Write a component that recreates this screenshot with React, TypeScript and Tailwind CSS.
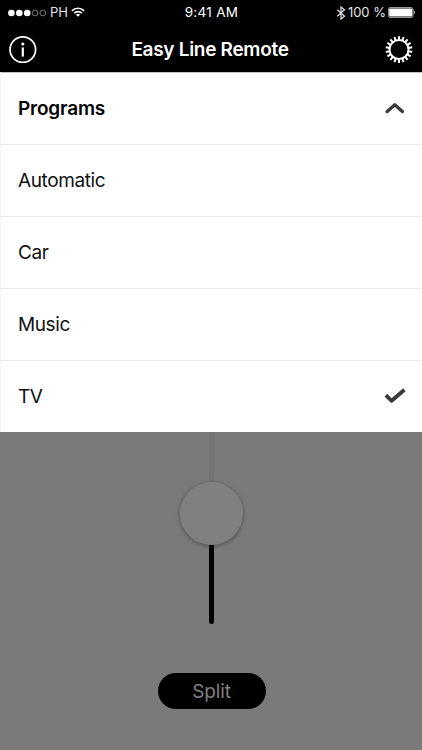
import { clsx } from "clsx"

const programs = ["Automatic", "Car", "Music", "TV"]
const teeth = Array.from({ length: 18 }, (_, i) => i * 20)

function StatusBar() {
    return (
        <div className="flex h-[25px] items-center justify-between pl-[8px] pr-[7px] text-[13px] leading-none">
            <div className="flex w-[140px] items-center">
                <svg width="39" height="8" viewBox="0 0 39 8" fill="#fff">
                    <circle cx="3.4" cy="4" r="3.3" />
                    <circle cx="11.3" cy="4" r="3.3" />
                    <circle cx="19.2" cy="4" r="3.3" />
                    <circle cx="27.1" cy="4" r="2.9" fill="none" stroke="#aaa" strokeWidth="0.7" />
                    <circle cx="34.8" cy="4" r="2.9" fill="none" stroke="#aaa" strokeWidth="0.7" />
                </svg>
                <span className="ml-[3px] w-[18px] text-[13px] text-[#e5e5e5]">PH</span>
                <svg className="mb-px ml-[3px]" width="14" height="10" viewBox="0 0 14 10" fill="none" stroke="#fff" strokeWidth="1.7">
                    <path d="M0.9 3.8a8.6 8.6 0 0 1 12.2 0" />
                    <path d="M3.2 6.2a5.4 5.4 0 0 1 7.6 0" />
                    <path d="M7 9.8 4.9 7.7a3 3 0 0 1 4.2 0Z" fill="#fff" stroke="none" />
                </svg>
            </div>
            <span className="whitespace-nowrap text-[13.5px] tracking-[0.3px]">9:41 AM</span>
            <div className="flex w-[140px] items-center justify-end">
                <svg width="10" height="14" viewBox="0 0 9 14" fill="none" stroke="#e5e5e5" strokeWidth="1.2">
                    <path d="M0.8 3.7 8 10.2 4.5 13V1L8 3.8 0.8 10.3" />
                </svg>
                <span className="ml-[2px] whitespace-nowrap text-[13px] text-[#e5e5e5]">100 %</span>
                <svg className="ml-[2px]" width="27" height="11" viewBox="0 0 27 11">
                    <rect x="0.5" y="0.5" width="24.5" height="10" rx="1.6" fill="none" stroke="#999" />
                    <rect x="1.2" y="1.4" width="23.1" height="8.2" rx="0.8" fill="#fff" />
                    <path d="M25.8 3.6c1.4.5 1.4 3.3 0 3.8Z" fill="#ccc" />
                </svg>
            </div>
        </div>
    )
}

function NavBar() {
    return (
        <div className="flex h-[47px] items-center justify-between pl-[9px] pr-[9px]">
            <svg width="28" height="28" viewBox="0 0 28 28" fill="none" stroke="#fff">
                <circle cx="13.8" cy="14.6" r="12.8" strokeWidth="1.7" />
                <path d="M13.8 12.4v9.2" strokeWidth="2.2" />
                <circle cx="13.8" cy="9" r="1.6" fill="#fff" stroke="none" />
            </svg>
            <h1 className="pr-[2px] pt-[2px] text-[19px] font-semibold leading-none tracking-[-0.3px]">Easy Line Remote</h1>
            <svg width="28" height="28" viewBox="0 0 28 28" fill="none" stroke="#fff">
                <circle cx="14" cy="14.6" r="9.5" strokeWidth="2" />
                {teeth.map((deg) => (
                    <path key={deg} d="M14 5V1.2" strokeWidth="2" transform={`rotate(${deg} 14 14.6)`} />
                ))}
            </svg>
        </div>
    )
}

function ProgramMenu() {
    return (
        <div className="h-[360px] border-l border-[#f3f3f3] bg-white text-[19px] text-[#111]">
            <div className="flex h-[72px] items-center justify-between border-t border-[#c4c4c4] pl-[17px] pr-[17px] text-black">
                <span className="pt-px font-semibold tracking-[-0.2px]">Programs</span>
                <svg className="mb-[2px]" width="20" height="12" viewBox="0 0 20 12" fill="none" stroke="#3a3a38" strokeWidth="3.3" strokeLinecap="round" strokeLinejoin="round">
                    <path d="M2.2 9.6 9.8 2.8l7.6 6.8" />
                </svg>
            </div>
            {programs.map((name) => (
                <div key={name} className="flex h-[72px] items-center justify-between border-t border-[#ebebeb] pl-[17px] pr-[16px]">
                    <span className="pt-[2px] tracking-[-0.4px]">{name}</span>
                    {name === "TV" && (
                        <svg className="mb-[2px]" width="22" height="16" viewBox="0 0 22 16" fill="none" stroke="#3a3a38" strokeWidth="3.8" strokeLinejoin="round">
                            <path d="M1.9 7.2 7.6 12.8 20.4 1.8" />
                        </svg>
                    )}
                </div>
            ))}
        </div>
    )
}

function VolumeSlider() {
    return (
        <div className="flex flex-col items-center">
            <div className="h-[50px] w-[5px] bg-[#747474]" />
            <div className="z-10 size-[63px] rounded-full bg-[#808080] shadow-[0_1px_5px_rgba(0,0,0,0.35)]" />
            <div className="h-[79px] w-[5px] rounded-b-full bg-black" />
        </div>
    )
}

export default function App() {
    return (
        <div className={clsx("h-[750px] w-[422px] overflow-hidden bg-[#7a7a7a]", "font-['Inter',sans-serif]")}>
            <header className="h-[72px] bg-black text-white">
                <StatusBar />
                <NavBar />
            </header>
            <ProgramMenu />
            <main className="flex flex-col items-center">
                <VolumeSlider />
                <button className="ml-px mt-[49px] h-[36px] w-[108px] rounded-full bg-black pt-[2px] text-[19px] tracking-[-0.1px] text-[#808080]">Split</button>
            </main>
        </div>
    )
}
